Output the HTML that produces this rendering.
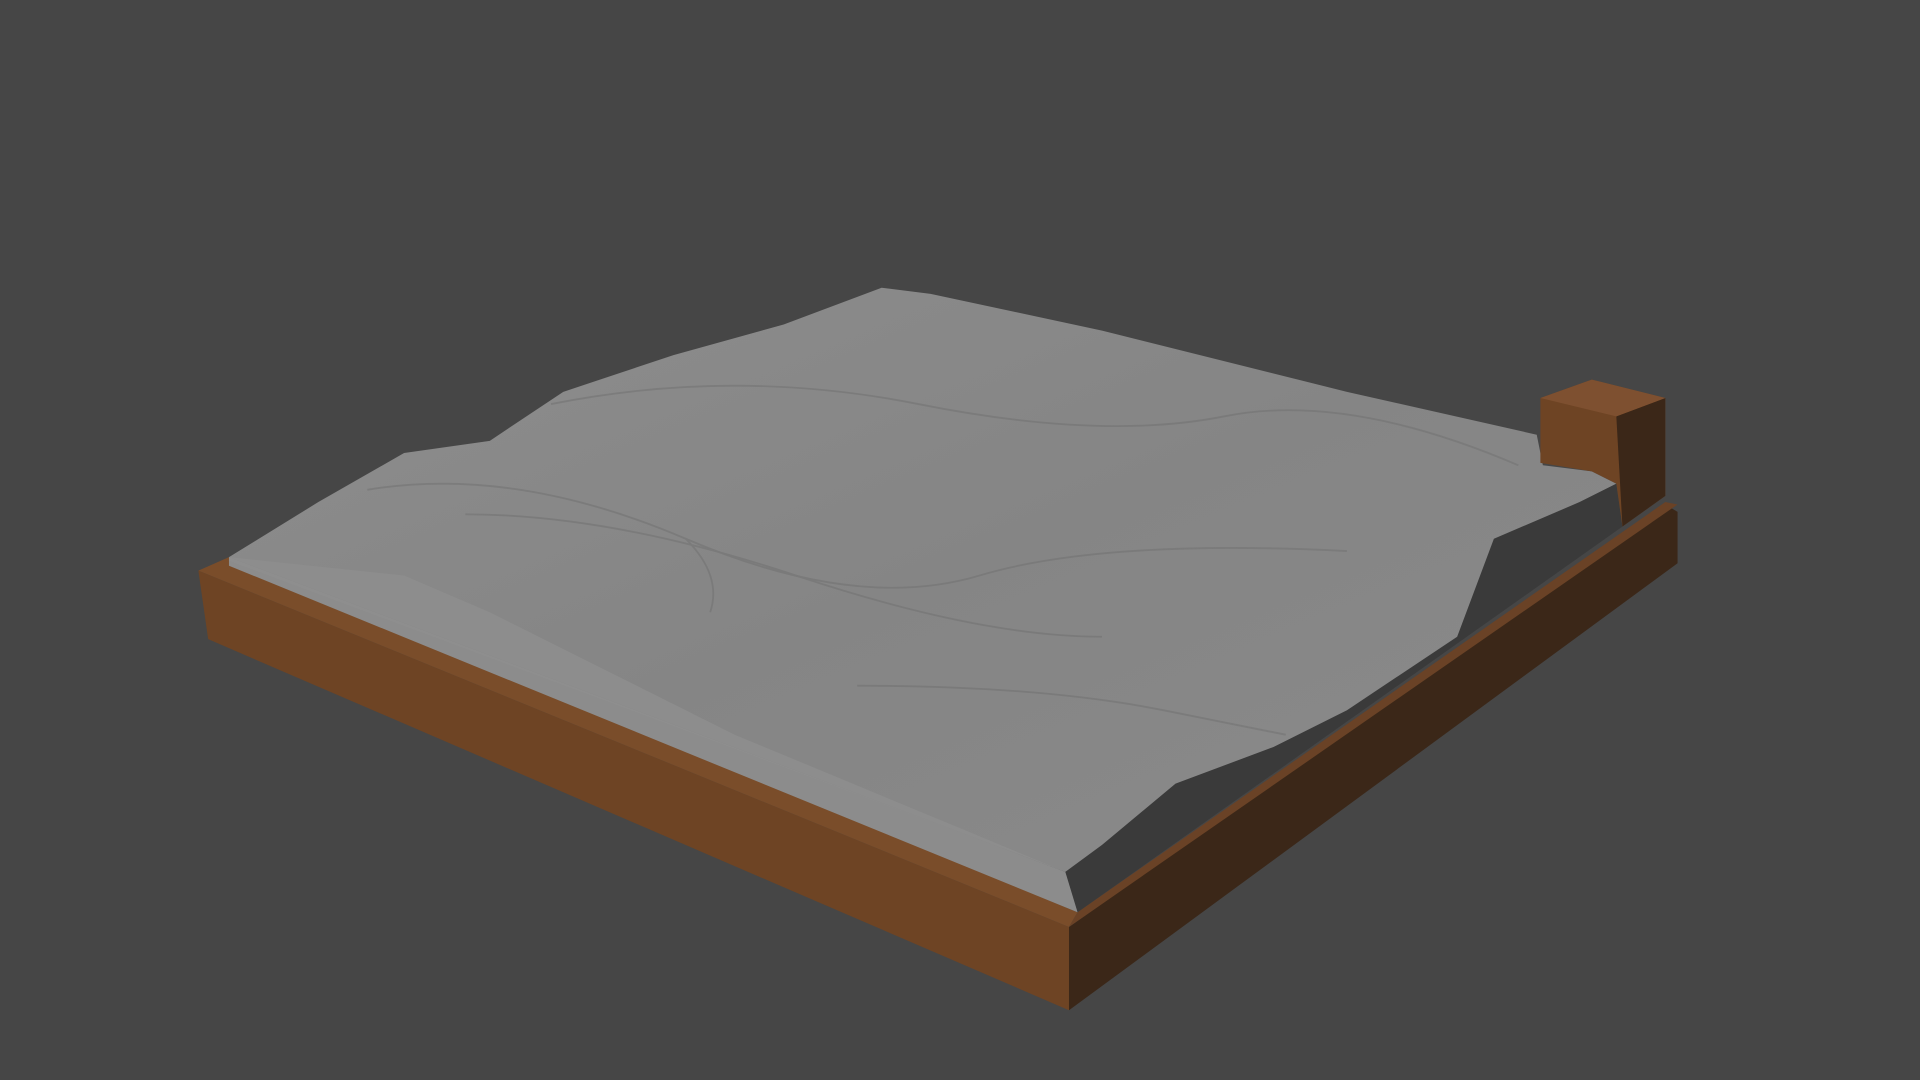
<!DOCTYPE html>
<html><head><meta charset="utf-8"><style>html,body{margin:0;padding:0;background:#464646;overflow:hidden}svg{display:block}</style></head>
<body>
<svg width="1920" height="1080" viewBox="0 0 1568 882" preserveAspectRatio="none" xmlns="http://www.w3.org/2000/svg">
<defs>
<linearGradient id="t" x1="0" y1="0" x2="1" y2="1">
<stop offset="0" stop-color="#8d8d8d"/><stop offset="0.5" stop-color="#858585"/><stop offset="1" stop-color="#8a8a8a"/>
</linearGradient>
</defs>
<rect width="1568" height="882" fill="#464646"/>
<polygon points="873,757 1360,412 1370,418 1370,460 873,825" fill="#3b2718"/>
<polygon points="162,466 873,757 873,825 170,522" fill="#6e4424"/>
<polygon points="162,466 187,455 880,745 873,757" fill="#7a4d2a"/>
<polygon points="873,757 880,745 1360,410 1370,412" fill="#6a4226"/>
<polygon points="1320,395 1325,430 880,745 870,712 900,690 960,640 1040,610 1100,580 1190,520 1220,440 1290,410" fill="#3a3a3a"/>
<polygon points="187,455 870,712 880,745 187,462" fill="#8c8c8c"/>
<polygon points="187,455 260,410 330,370 400,360 460,320 550,290 640,265 720,235 760,240 900,270 1100,320 1255,355 1260,380 1300,385 1320,395 1290,410 1220,440 1190,520 1100,580 1040,610 960,640 900,690 870,712" fill="url(#t)"/>
<polygon points="187,455 330,470 400,500 600,600 870,712 187,458" fill="#8e8e8e" opacity="0.8"/>
<g stroke="#707070" stroke-width="1.5" fill="none" opacity="0.5">
<path d="M300,400 Q420,380 560,440 T800,470 T1100,450"/>
<path d="M450,330 Q600,300 750,330 T1000,340 T1240,380"/>
<path d="M560,440 Q590,470 580,500"/>
<path d="M700,560 Q850,560 950,580 T1050,600"/>
<path d="M380,420 Q500,420 650,470 T900,520"/>
</g>
<polygon points="1258,325 1300,310 1360,325 1360,405 1325,430 1320,395 1300,385 1258,378" fill="#6e4424"/>
<polygon points="1320,340 1360,325 1360,405 1325,430" fill="#3b2718"/>
<polygon points="1258,325 1300,310 1360,325 1320,340" fill="#7e5030"/>
</svg>
</body></html>
